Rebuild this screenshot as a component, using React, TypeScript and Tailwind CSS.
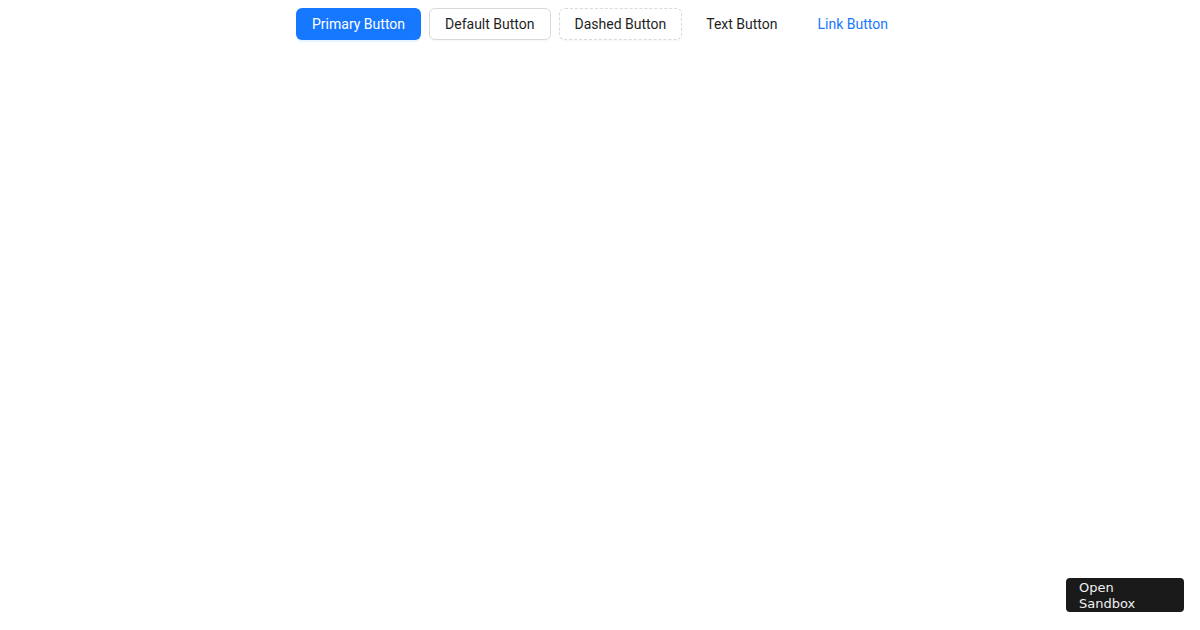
export default function App() {
  return (
    <div className="relative h-[630px] w-full bg-white" style={{ fontFamily: 'Roboto, "Liberation Sans", sans-serif' }}>
      <div className="flex justify-center gap-2 pt-2 text-[14px] leading-[22px]">
        <button className="h-8 rounded-md bg-[#1677ff] px-[16px] text-white shadow-[0_2px_0_rgba(5,145,255,0.1)]">
          Primary Button
        </button>
        <button className="h-8 rounded-md border border-[#d9d9d9] bg-white px-[15px] text-[#1f1f1f] shadow-[0_2px_0_rgba(0,0,0,0.02)]">
          Default Button
        </button>
        <button className="h-8 rounded-md border border-dashed border-[#d9d9d9] bg-white px-[15px] text-[#1f1f1f] shadow-[0_2px_0_rgba(0,0,0,0.02)]">
          Dashed Button
        </button>
        <button className="h-8 rounded-md px-[16px] text-[#1f1f1f]">Text Button</button>
        <button className="h-8 rounded-md px-[16px] text-[#1677ff]">Link Button</button>
      </div>

      <div
        className="absolute bottom-[18px] right-[16px] w-[118px] rounded bg-[#1a1a1a] pt-[2px] pb-0 pl-[13px] pr-[40px] text-[13px] leading-[16px] text-[#f0f0f0]"
        style={{ fontFamily: '"DejaVu Sans", sans-serif' }}
      >
        Open Sandbox
      </div>
    </div>
  );
}
